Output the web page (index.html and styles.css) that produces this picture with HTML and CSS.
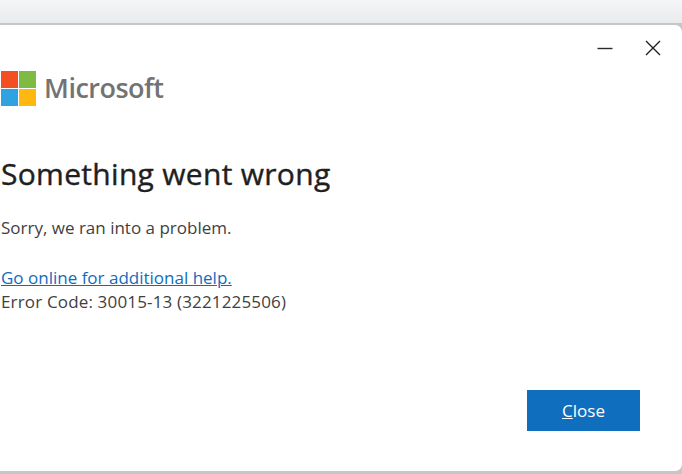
FILE: index.html
```html
<!DOCTYPE html>
<html>
<head>
    <meta name="viewport" content="width=device-width, initial-scale=1.0">
    <link rel="stylesheet" href="styles.css">
</head>
<body>
    <div class="backdrop"></div>
    <div class="dialog">
        <div class="window-controls">
            <svg class="control" width="16" height="16" viewBox="0 0 16 16">
                <path d="M0.5 8.5H15.5" stroke="#2b2b2b" stroke-width="1.4" fill="none"/>
            </svg>
            <svg class="control" width="16" height="16" viewBox="0 0 16 16">
                <path d="M1 1L15 15M15 1L1 15" stroke="#1f1f1f" stroke-width="1.4" fill="none"/>
            </svg>
        </div>

        <div class="brand">
            <div class="logo">
                <span class="tile red"></span>
                <span class="tile green"></span>
                <span class="tile blue"></span>
                <span class="tile yellow"></span>
            </div>
            <span class="brand-name">Microsoft</span>
        </div>

        <h1>Something went wrong</h1>
        <p class="message">Sorry, we ran into a problem.</p>
        <a class="help-link" href="#">Go online for additional help.</a>
        <p class="error-code">Error Code: 30015-13 (3221225506)</p>

        <div class="actions">
            <button><u>C</u>lose</button>
        </div>
    </div>
</body>
</html>
```

FILE: styles.css
```css
html, body {
    margin: 0;
    height: 100%;
}

body {
    width: 682px;
    height: 474px;
    overflow: hidden;
    display: flex;
    flex-direction: column;
    background-color: #c6c6c6;
    font-family: 'Open Sans', 'Noto Sans', sans-serif;
}

.backdrop {
    height: 23px;
    flex-shrink: 0;
    background: linear-gradient(#f5f6f7, #e9eaeb);
}

.dialog {
    box-sizing: border-box;
    height: 446px;
    margin-top: 2px;
    padding: 0 42px 0 1px;
    background-color: #ffffff;
    border-radius: 0 7px 7px 0;
}

.window-controls {
    display: flex;
    justify-content: flex-end;
    gap: 32px;
    padding: 15px 0 0 0;
    margin-right: -21px;
    height: 16px;
}

.brand {
    display: flex;
    align-items: center;
    margin-top: 14px;
    gap: 8px;
}

.logo {
    display: grid;
    grid-template-columns: 17px 17px;
    grid-template-rows: 17px 17px;
    gap: 1px;
}

.tile.red { background-color: #f25022; }
.tile.green { background-color: #7fba42; }
.tile.blue { background-color: #2fa3e0; }
.tile.yellow { background-color: #ffb80f; }

.brand-name {
    font-size: 27px;
    font-weight: 600;
    line-height: 36px;
    letter-spacing: -0.5px;
    color: #737373;
}

h1 {
    margin: 48px 0 0 0;
    font-size: 30px;
    font-weight: 500;
    line-height: 40px;
    letter-spacing: 0.3px;
    -webkit-text-stroke: 0.4px #1f1f1f;
    color: #1f1f1f;
}

.message {
    margin: 22px 0 0 0;
    font-size: 17px;
    line-height: 24px;
    color: #3f3f3f;
}

.help-link {
    display: block;
    margin-top: 26px;
    font-size: 17px;
    line-height: 24px;
    color: #0f6cbd;
}

.error-code {
    margin: 0;
    font-size: 17px;
    line-height: 24px;
    letter-spacing: 0.16px;
    color: #3f3f3f;
}

.actions {
    display: flex;
    justify-content: flex-end;
    margin-top: 76px;
}

button {
    width: 113px;
    height: 41px;
    padding: 0;
    border: none;
    background-color: #106ebe;
    color: #ffffff;
    font-family: inherit;
    font-size: 17px;
}
```
